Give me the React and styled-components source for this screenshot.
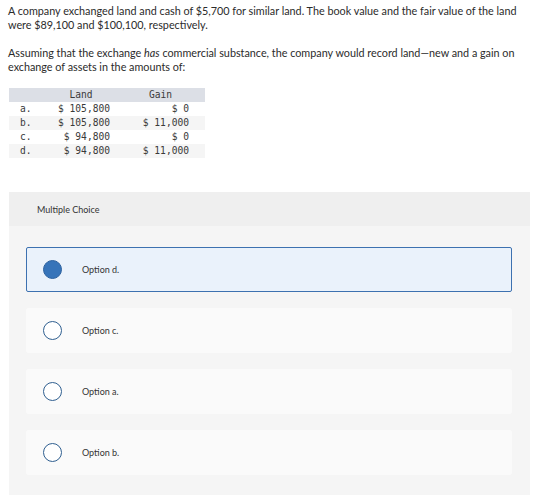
import React from "react";
import styled, { createGlobalStyle } from "styled-components";

const Global = createGlobalStyle`
  html, body { margin: 0; padding: 0; background: #ffffff; }
  body { font-family: Lato, "Open Sans", Arial, sans-serif; }
`;

const Page = styled.div`
  width: 535px;
  box-sizing: border-box;
  padding: 4px 8px 0 8px;
`;

const Para = styled.p`
  margin: 0 0 14px 0;
  font-family: Lato, "Open Sans", Arial, sans-serif;
  font-size: 10.8px;
  line-height: 14px;
  color: #2b2b2b;
  em { font-style: italic; }
`;

const Table = styled.table`
  margin: 0 0 0 1px;
  border-collapse: collapse;
  font-family: "DejaVu Sans Mono", "Liberation Mono", monospace;
  font-size: 9.6px;
  color: #3a3a3a;
  width: 196px;
  table-layout: fixed;
`;

const HeadRow = styled.tr`
  background: #dcdfe6;
  height: 14px;
`;

const Row = styled.tr`
  height: 14px;
  background: ${(p) => (p.$shade ? "#f5f5f5" : "#ffffff")};
`;

const Th = styled.th`
  font-weight: normal;
  padding: 0;
  line-height: 14px;
  text-align: ${(p) => p.$align || "center"};
  width: ${(p) => p.$w}px;
`;

const Td = styled.td`
  padding: 0 ${(p) => p.$pr || 0}px 0 ${(p) => p.$pl || 0}px;
  line-height: 14px;
  white-space: pre;
  text-align: ${(p) => p.$align || "right"};
`;

const Panel = styled.section`
  margin: 34px 0 0 1px;
  width: 521px;
`;

const PanelHead = styled.div`
  height: 34px;
  background: #efefef;
  display: flex;
  align-items: center;
  padding-left: 28px;
  font-family: Lato, "Open Sans", Arial, sans-serif;
  font-size: 9px;
  color: #333;
`;

const PanelBody = styled.div`
  background: #f5f5f5;
  padding: 21px 18px 20px 17px;
  display: flex;
  flex-direction: column;
  gap: 16px;
`;

const Option = styled.label`
  box-sizing: border-box;
  height: 45px;
  display: flex;
  align-items: center;
  padding-left: 16px;
  border-radius: 2px;
  background: ${(p) => (p.$selected ? "#eaf2fb" : "#fafafa")};
  border: 1px solid ${(p) => (p.$selected ? "#3d71b0" : "#fafafa")};
`;

const Radio = styled.span`
  box-sizing: border-box;
  width: 19px;
  height: 19px;
  border-radius: 50%;
  flex: none;
  border: 1.5px solid ${(p) => (p.$selected ? "#2d629f" : "#2f5f90")};
  background: ${(p) => (p.$selected ? "#3674b9" : "#ffffff")};
`;

const OptionText = styled.span`
  margin-left: 20px;
  font-family: Lato, "Open Sans", Arial, sans-serif;
  font-size: 9px;
  color: #333;
`;

const rows = [
  ["a.", "$ 105,800", "$ 0"],
  ["b.", "$ 105,800", "$ 11,000"],
  ["c.", "$ 94,800", "$ 0"],
  ["d.", "$ 94,800", "$ 11,000"],
];

const options = [
  { label: "Option d.", selected: true },
  { label: "Option c." },
  { label: "Option a." },
  { label: "Option b." },
];

export default function App() {
  return (
    <Page>
      <Global />
      <Para>
        A company exchanged land and cash of $5,700 for similar land. The book value and the fair value of the land
        were $89,100 and $100,100, respectively.
      </Para>
      <Para>
        Assuming that the exchange <em>has</em> commercial substance, the company would record land—new and a gain on
        exchange of assets in the amounts of:
      </Para>
      <Table>
        <thead>
          <HeadRow>
            <Th $w={37}></Th>
            <Th $w={70}>Land</Th>
            <Th $w={89}>Gain</Th>
          </HeadRow>
        </thead>
        <tbody>
          {rows.map((r, i) => (
            <Row key={r[0]} $shade={i % 2 === 1}>
              <Td $align="left" $pl={11}>{r[0]}</Td>
              <Td $pr={6}>{r[1]}</Td>
              <Td $pr={16}>{r[2]}</Td>
            </Row>
          ))}
        </tbody>
      </Table>
      <Panel>
        <PanelHead>Multiple Choice</PanelHead>
        <PanelBody>
          {options.map((o) => (
            <Option key={o.label} $selected={o.selected}>
              <Radio $selected={o.selected} />
              <OptionText>{o.label}</OptionText>
            </Option>
          ))}
        </PanelBody>
      </Panel>
    </Page>
  );
}
